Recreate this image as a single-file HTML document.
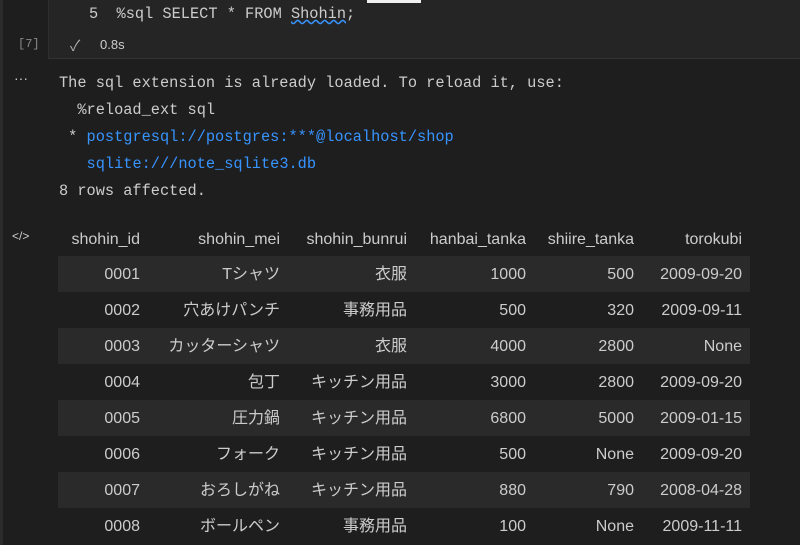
<!DOCTYPE html>
<html><head><meta charset="utf-8"><style>
body{margin:0;width:800px;height:545px;background:#1e1e1e;overflow:hidden;position:relative;font-family:"Liberation Sans","Noto Sans CJK JP",sans-serif;color:#cccccc}
.abs{position:absolute;white-space:pre}
.mono{font-family:"Liberation Mono","Noto Sans CJK JP",monospace;font-size:15.3px}
table{position:absolute;left:58px;top:224px;border-collapse:collapse;font-size:16px;color:#cccccc}
td,th{text-align:right;padding:0 8px 0 8px;font-weight:normal;white-space:nowrap;line-height:20px}
td{padding-top:2px;height:34px}
th{height:32px}
tr.s td{background:#2a2a2b}
</style></head><body>
<div class="abs" style="left:0;top:0;width:3px;height:545px;background:#2b2b2b"></div>
<div class="abs" style="left:48px;top:0;width:752px;height:58px;background:#252526;border-bottom:1px solid #333"></div>
<div class="abs" style="left:48px;top:0;width:1px;height:59px;background:#2f2f2f"></div>
<div class="abs" style="left:367px;top:0;width:54px;height:3px;background:#f0f0f0"></div>
<div class="abs mono" style="left:89px;top:5px;color:#cccccc">5  %sql SELECT * FROM <span style="text-decoration:underline wavy #3794ff">Shohin</span>;</div>
<div class="abs mono" style="left:18px;top:37px;font-size:12px;color:#888">[7]</div>
<div class="abs" style="left:70px;top:35px;font-size:15px;color:#aaa">✓</div>
<div class="abs" style="left:100px;top:37px;font-size:13px;color:#cccccc">0.8s</div>
<div class="abs" style="left:14px;top:70px;font-size:14px;color:#ccc">···</div>
<div class="abs mono" style="left:59px;top:70px;line-height:27px">The sql extension is already loaded. To reload it, use:
  %reload_ext sql
 * <span style="color:#3794ff">postgresql://postgres:***@localhost/shop</span>
   <span style="color:#3794ff">sqlite:///note_sqlite3.db</span>
8 rows affected.</div>
<div class="abs" style="left:12px;top:229px;font-size:12px;color:#ccc">&lt;/&gt;</div>
<table>
<tr><th style="width:74px">shohin_id</th><th style="width:124px">shohin_mei</th><th style="width:111px">shohin_bunrui</th><th style="width:103px">hanbai_tanka</th><th style="width:92px">shiire_tanka</th><th style="width:92px">torokubi</th></tr>
<tr class="s"><td>0001</td><td>Tシャツ</td><td>衣服</td><td>1000</td><td>500</td><td>2009-09-20</td></tr>
<tr><td>0002</td><td>穴あけパンチ</td><td>事務用品</td><td>500</td><td>320</td><td>2009-09-11</td></tr>
<tr class="s"><td>0003</td><td>カッターシャツ</td><td>衣服</td><td>4000</td><td>2800</td><td>None</td></tr>
<tr><td>0004</td><td>包丁</td><td>キッチン用品</td><td>3000</td><td>2800</td><td>2009-09-20</td></tr>
<tr class="s"><td>0005</td><td>圧力鍋</td><td>キッチン用品</td><td>6800</td><td>5000</td><td>2009-01-15</td></tr>
<tr><td>0006</td><td>フォーク</td><td>キッチン用品</td><td>500</td><td>None</td><td>2009-09-20</td></tr>
<tr class="s"><td>0007</td><td>おろしがね</td><td>キッチン用品</td><td>880</td><td>790</td><td>2008-04-28</td></tr>
<tr><td>0008</td><td>ボールペン</td><td>事務用品</td><td>100</td><td>None</td><td>2009-11-11</td></tr>
</table>
</body></html>
